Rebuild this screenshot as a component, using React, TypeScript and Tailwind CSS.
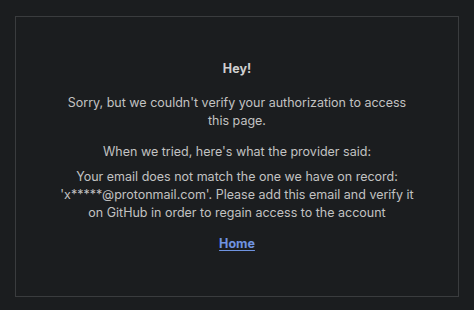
export default function App() {
  return (
    <div
      className="w-[474px] h-[310px] bg-[#1b1d1f] pt-[16px] px-[15px]"
      style={{ fontFamily: "Inter, 'Noto Sans', sans-serif" }}
    >
      <div className="h-[281px] border border-[#3a3c3e] flex flex-col items-center justify-center text-center text-[12.5px] leading-[17.75px] text-[#c2c2c2]">
        <p className="font-bold text-[#cfcfcf] mb-[16px]">Hey!</p>
        <p className="w-[345px] mb-[14px]">
          Sorry, but we couldn't verify your authorization to access this page.
        </p>
        <p className="mb-[7px]">When we tried, here's what the provider said:</p>
        <p className="w-[356px] mb-[14px]">
          Your email does not match the one we have on record:
          'x*****@protonmail.com'. Please add this email and verify it on GitHub in
          order to regain access to the account
        </p>
        <a href="#" className="font-bold text-[#6f93e0] underline underline-offset-2">
          Home
        </a>
      </div>
    </div>
  );
}
